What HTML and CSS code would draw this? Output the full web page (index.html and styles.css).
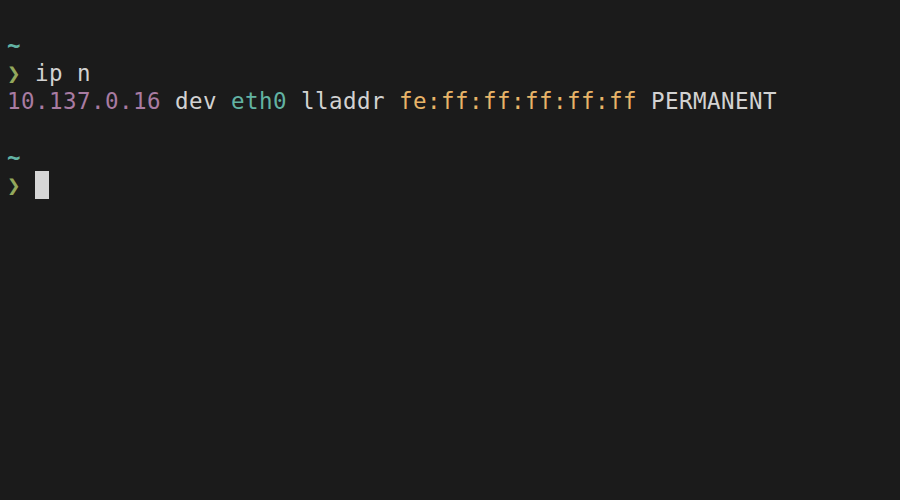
FILE: index.html
```html
<!DOCTYPE html>
<html>
<head>
<meta charset="utf-8">
<link rel="stylesheet" href="styles.css">
</head>
<body>
<div class="term">
<div class="line"><span class="cwd">~</span></div>
<div class="line"><span class="prompt">❯</span> ip n</div>
<div class="line"><span class="ip">10.137.0.16</span> dev <span class="iface">eth0</span> lladdr <span class="mac">fe:ff:ff:ff:ff:ff</span> PERMANENT</div>
<div class="line">&nbsp;</div>
<div class="line"><span class="cwd">~</span></div>
<div class="line"><span class="prompt">❯</span> <span class="cursor">&nbsp;</span></div>
</div>
</body>
</html>
```
FILE: styles.css
```css
html, body {
  margin: 0;
  padding: 0;
  background: #1b1b1b;
  width: 900px;
  height: 500px;
  overflow: hidden;
}
.term {
  padding: 31px 8px 0 7px;
  font-family: "DejaVu Sans Mono", monospace;
  font-size: 22.5px;
  letter-spacing: 0.455px;
  color: #d2d2d2;
}
.line {
  height: 28px;
  line-height: 28px;
  white-space: pre;
}
.cwd { color: #62b3a3; font-weight: bold; }
.prompt { color: #93a85c; }
.ip { color: #a97ba2; }
.iface { color: #62b3a3; }
.mac { color: #e8b468; }
.cursor {
  display: inline-block;
  width: 14px;
  height: 28px;
  vertical-align: top;
  background: #d6d6d6;
}
```
